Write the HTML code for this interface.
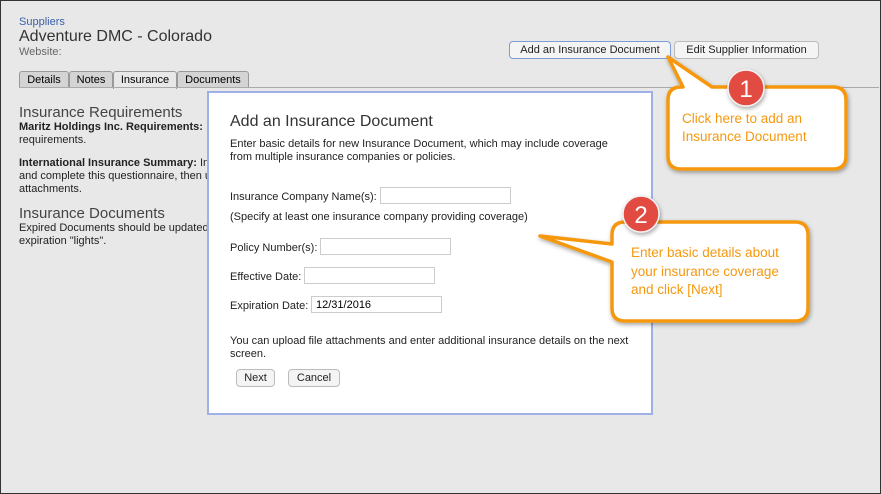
<!DOCTYPE html><html><head><style>
body{margin:0;width:881px;height:494px;overflow:hidden;font-family:"Liberation Sans",sans-serif;}
.frame{position:absolute;left:0;top:0;width:879px;height:492px;border:1px solid #333;background:#e8e8e8;}
.a{position:absolute;white-space:nowrap;color:#222;font-size:11px;line-height:13px}
.btn{position:absolute;background:#f4f4f4;border:1px solid #bbb;border-radius:4px;font-size:11px;line-height:16px;text-align:center;color:#222}
.tab{position:absolute;top:71px;height:16px;background:#d4d4d4;border:1px solid #999;border-bottom:none;font-size:11px;line-height:16px;text-align:center;border-radius:3px 3px 0 0}
.in{position:absolute;height:17px;background:#fff;border:1px solid #ccc;font-size:11px;line-height:17px;padding-left:4px;box-sizing:border-box}
b{font-weight:bold}
</style></head><body><div class="frame"></div>
<div class="a" style="left:19px;top:16px;color:#3a5fa8">Suppliers</div>
<div class="a" style="left:19px;top:28px;font-size:16px;line-height:18px;color:#333">Adventure DMC - Colorado</div>
<div class="a" style="left:19px;top:46px;color:#666">Website:</div>
<div class="tab" style="left:19px;width:48px">Details</div>
<div class="tab" style="left:69px;width:42px">Notes</div>
<div class="tab" style="left:113px;width:62px;background:#e8e8e8;height:17px">Insurance</div>
<div class="tab" style="left:177px;width:70px">Documents</div>
<div style="position:absolute;left:19px;top:87px;width:860px;border-top:1px solid #aaa"></div>
<div class="a" style="left:19px;top:104px;font-size:15px;line-height:17px;color:#444">Insurance Requirements</div>
<div class="a" style="left:19px;top:121px"><b>Maritz Holdings Inc. Requirements:</b><br>requirements.</div>
<div class="a" style="left:19px;top:157px"><b>International Insurance Summary:</b> In<br>and complete this questionnaire, then u<br>attachments.</div>
<div class="a" style="left:19px;top:205px;font-size:15px;line-height:17px;color:#444">Insurance Documents</div>
<div class="a" style="left:19px;top:222px">Expired Documents should be updated<br>expiration "lights".</div>
<div class="btn" style="left:509px;top:41px;width:160px;border-color:#7d9bd6">Add an Insurance Document</div>
<div class="btn" style="left:674px;top:41px;width:143px">Edit Supplier Information</div>
<div style="position:absolute;left:207px;top:91px;width:442px;height:320px;background:#fff;border:2px solid #9fb0e6"></div>
<div class="a" style="left:230px;top:113px;font-size:16px;line-height:17px;color:#333">Add an Insurance Document</div>
<div class="a" style="left:230px;top:138px">Enter basic details for new Insurance Document, which may include coverage<br>from multiple insurance companies or policies.</div>
<div class="a" style="left:230px;top:191px">Insurance Company Name(s):</div>
<div class="in" style="left:380px;top:187px;width:131px"></div>
<div class="a" style="left:230px;top:211px">(Specify at least one insurance company providing coverage)</div>
<div class="a" style="left:230px;top:242px">Policy Number(s):</div>
<div class="in" style="left:320px;top:238px;width:131px"></div>
<div class="a" style="left:230px;top:271px">Effective Date:</div>
<div class="in" style="left:304px;top:267px;width:131px"></div>
<div class="a" style="left:230px;top:300px">Expiration Date:</div>
<div class="in" style="left:311px;top:296px;width:131px">12/31/2016</div>
<div class="a" style="left:230px;top:335px">You can upload file attachments and enter additional insurance details on the next<br>screen.</div>
<div class="btn" style="left:236px;top:369px;width:37px">Next</div>
<div class="btn" style="left:288px;top:369px;width:50px">Cancel</div>
<svg style="position:absolute;left:0;top:0" width="881" height="494">
<defs><filter id="s"><feDropShadow dx="1" dy="2" stdDeviation="2" flood-opacity=".35"/></filter></defs>
<g filter="url(#s)" fill="#fff" stroke="#f5980f" stroke-width="3.5" stroke-linejoin="round">
<path d="M683 87 L668 57 L712 87 L833 87 Q846 87 846 100 L846 156 Q846 169 833 169 L681 169 Q668 169 668 156 L668 100 Q668 87 681 87 Z"/>
<path d="M625 222 L795 222 Q808 222 808 235 L808 308 Q808 321 795 321 L625 321 Q612 321 612 308 L612 262 L540 236 L612 244 L612 235 Q612 222 625 222 Z"/>
</g>
<g filter="url(#s)" fill="#e14b43" stroke="#f2f2f2" stroke-width="1.5"><circle cx="746" cy="88" r="18"/><circle cx="641" cy="214" r="18"/></g>
<g font-family="Liberation Sans,sans-serif" text-anchor="middle" fill="#fff" font-size="24"><text x="746" y="97">1</text><text x="641" y="223">2</text></g>
<g font-family="Liberation Sans,sans-serif" fill="#f5980f" font-size="13.5"><text x="682" y="123">Click here to add an</text><text x="682" y="141">Insurance Document</text>
<text x="631" y="257">Enter basic details about</text><text x="631" y="276">your insurance coverage</text><text x="631" y="294">and click [Next]</text></g>
</svg>
</body></html>
